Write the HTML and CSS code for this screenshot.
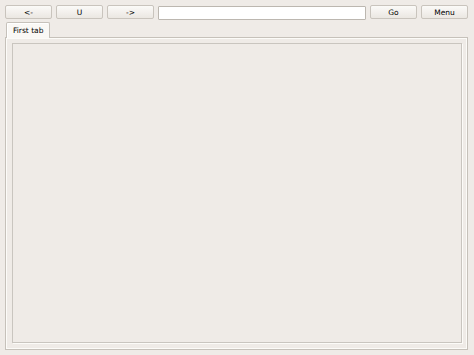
FILE: index.html
```html
<!DOCTYPE html>
<html lang="en">
<head>
    <meta charset="UTF-8">
    <title>Browser</title>
    <link rel="stylesheet" href="styles.css">
</head>
<body>
    <div class="window">
        <div class="toolbar">
            <button class="btn">&lt;-</button>
            <button class="btn">U</button>
            <button class="btn">-&gt;</button>
            <input class="address" type="text">
            <button class="btn">Go</button>
            <button class="btn">Menu</button>
        </div>
        <div class="tabs">
            <div class="tab-bar">
                <div class="tab active">First tab</div>
            </div>
            <div class="tab-pane">
                <div class="frame"></div>
            </div>
        </div>
    </div>
</body>
</html>
```

FILE: styles.css
```css
html, body {
    margin: 0;
    padding: 0;
    height: 100%;
    background: #efebe7;
    font-family: 'DejaVu Sans', sans-serif;
    font-size: 7.5px;
    color: #000;
    overflow: hidden;
}
.window {
    height: 100%;
    box-sizing: border-box;
    padding: 5px 6px 5px 5px;
    display: flex;
    flex-direction: column;
}
.toolbar {
    display: flex;
    gap: 4px;
    height: 14px;
}
.btn {
    width: 47px;
    height: 14px;
    padding: 0;
    border: 1px solid #c9c4bd;
    border-radius: 2px;
    background: linear-gradient(#fbfaf8, #ebe7e2);
    font-family: inherit;
    font-size: 7.5px;
    color: #000;
}
.address {
    flex: 1;
    height: 12px;
    margin-top: 1px;
    padding: 0;
    border: 1px solid #bcb7b0;
    border-radius: 1px;
    background: #fff;
}
.tabs {
    flex: 1;
    display: flex;
    flex-direction: column;
    margin-top: 2px;
}
.tab-bar {
    display: flex;
    padding-left: 1px;
}
.tab {
    height: 15px;
    line-height: 15px;
    padding: 0 6px 0 6px;
    border: 1px solid #c6c1ba;
    border-bottom: none;
    border-radius: 2px 2px 0 0;
    background: #faf8f5;
    box-shadow: inset 1px 1px 0 #fff;
    position: relative;
    top: 1px;
}
.tab-pane {
    flex: 1;
    border: 1px solid #c6c1ba;
    box-shadow: inset 1px 1px 0 #fcfbf8, inset -1px -1px 0 #fcfbf8;
    padding: 5px 5px 6px 6px;
    display: flex;
}
.frame {
    flex: 1;
    border: 1px solid #c9c5bf;
    box-shadow: 1px 1px 0 #fcfbf8;
    background: #efebe7;
}
```
